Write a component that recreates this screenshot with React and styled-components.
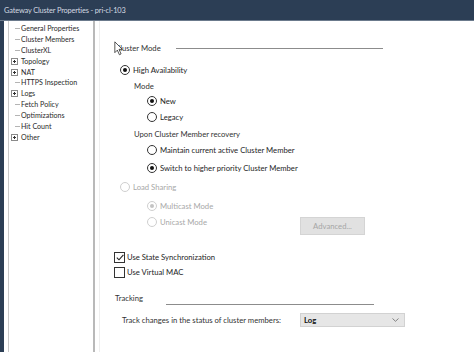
import React from "react";
import styled, { createGlobalStyle } from "styled-components";

const GlobalStyle = createGlobalStyle`
  html, body { margin: 0; padding: 0; }
  body {
    font-family: Lato, "Noto Sans", sans-serif;
    font-size: 7.7px;
    color: #1e1e1e;
    background: #fff;
  }
`;

const Window = styled.div`
  width: 474px;
  height: 352px;
  display: flex;
  flex-direction: column;
  background: #2c3e55;
  overflow: hidden;
`;

const TitleBar = styled.div`
  height: 21px;
  flex: none;
  display: flex;
  align-items: center;
  padding-left: 4px;
  color: #d3d9e1;
  font-size: 7.4px;
  letter-spacing: -0.15px;
  border-bottom: 1px solid #6b7a8c;
  box-sizing: border-box;
`;

const Body = styled.div`
  flex: 1;
  display: flex;
  margin-left: 4px;
  background: #fff;
  padding-left: 4px;
`;

const TreePanel = styled.div`
  width: 84px;
  flex: none;
  border-left: 1px solid #c9c9c9;
  border-right: 2px solid #b9b9b9;
  padding-top: 2px;
  font-size: 7.1px;
`;

const TreeRow = styled.div`
  position: relative;
  height: 10.9px;
  display: flex;
  align-items: center;
  padding-left: 12px;
  white-space: nowrap;
  color: #2a2a2a;
`;

const Branch = styled.span`
  position: absolute;
  left: 6px;
  top: 5px;
  width: 5px;
  border-top: 1px solid #b4b4b4;
`;

const Expander = styled.span`
  position: absolute;
  left: 2px;
  top: 2px;
  width: 5px;
  height: 5px;
  border: 1px solid #8a8a8a;
  background: #fff;
  &::before, &::after {
    content: "";
    position: absolute;
    background: #333;
  }
  &::before { left: 1px; top: 2px; width: 3px; height: 1px; }
  &::after { left: 2px; top: 1px; width: 1px; height: 3px; }
`;

const Content = styled.div`
  flex: 1;
  position: relative;
  padding: 21px 0 0 15px;
  border-left: 1px solid #eeeeee;
  margin-left: 4px;
`;

const GroupHeader = styled.div`
  display: flex;
  align-items: center;
  height: 12px;
  width: ${(p) => p.$width}px;
  margin-top: ${(p) => p.$top || 0}px;
  color: #333;
  white-space: nowrap;
  & > span {
    width: ${(p) => p.$labelWidth}px;
    flex: none;
  }
  &::after {
    content: "";
    flex: 1;
    border-top: 1px solid #8c8c8c;
    transform: translateY(${(p) => p.$lineDrop || 0}px);
  }
`;

const Row = styled.div`
  display: flex;
  align-items: center;
  height: 12px;
  margin-left: ${(p) => p.$indent || 0}px;
  margin-top: ${(p) => p.$top || 0}px;
  color: ${(p) => (p.$disabled ? "#a8a8a8" : "#1e1e1e")};
  white-space: nowrap;
`;

const Label = styled.div`
  height: 12px;
  display: flex;
  align-items: center;
  margin-left: ${(p) => p.$indent || 0}px;
  margin-top: ${(p) => p.$top || 0}px;
  color: #333;
`;

const Radio = styled.span`
  width: 8px;
  height: 8px;
  border-radius: 50%;
  border: 1px solid ${(p) => (p.$disabled ? "#cfcfcf" : "#333")};
  margin-right: 3px;
  display: flex;
  align-items: center;
  justify-content: center;
  flex: none;
  &::after {
    content: "";
    display: ${(p) => (p.$checked ? "block" : "none")};
    width: 4px;
    height: 4px;
    border-radius: 50%;
    background: ${(p) => (p.$disabled ? "#c4c4c4" : "#111")};
  }
`;

const Check = styled.span`
  width: 9px;
  height: 9px;
  border: 1px solid #333;
  margin-right: 2px;
  flex: none;
  display: flex;
  align-items: center;
  justify-content: center;
`;

const ButtonRow = styled.div`
  display: flex;
  align-items: flex-start;
  justify-content: space-between;
  width: 250px;
`;

const DisabledButton = styled.div`
  width: 65px;
  height: 18px;
  margin-top: 5px;
  background: #e1e1e1;
  border: 1px solid #d4d4d4;
  color: #a6a6a6;
  display: flex;
  align-items: center;
  justify-content: center;
  box-sizing: border-box;
`;

const SelectRow = styled.div`
  display: flex;
  align-items: center;
  margin-left: 7px;
  margin-top: 9px;
`;

const SelectLabel = styled.div`
  width: 178px;
  color: #333;
  white-space: nowrap;
`;

const Select = styled.div`
  width: 105px;
  height: 14px;
  background: #e6e6e6;
  border: 1px solid #d2d2d2;
  box-sizing: border-box;
  display: flex;
  align-items: center;
  justify-content: space-between;
  padding: 0 5px 0 3px;
  color: #111;
  font-weight: 700;
`;

const Cursor = styled.svg`
  position: absolute;
  left: 14px;
  top: 20px;
`;

const treeItems = [
  { name: "General Properties" },
  { name: "Cluster Members" },
  { name: "ClusterXL" },
  { name: "Topology", expand: true },
  { name: "NAT", expand: true },
  { name: "HTTPS Inspection" },
  { name: "Logs", expand: true },
  { name: "Fetch Policy" },
  { name: "Optimizations" },
  { name: "Hit Count" },
  { name: "Other", expand: true },
];

export default function App() {
  return (
    <>
      <GlobalStyle />
      <Window>
        <TitleBar>Gateway Cluster Properties - pri-cl-103</TitleBar>
        <Body>
          <TreePanel>
            {treeItems.map((item) => (
              <TreeRow key={item.name}>
                {item.expand ? <Expander /> : <Branch />}
                {item.name}
              </TreeRow>
            ))}
          </TreePanel>
          <Content>
            <GroupHeader $width={268} $labelWidth={61}>
              <span>Cluster Mode</span>
            </GroupHeader>
            <Row $indent={5} $top={10}>
              <Radio $checked />
              High Availability
            </Row>
            <Label $indent={19} $top={4}>Mode</Label>
            <Row $indent={32} $top={3}>
              <Radio $checked />
              New
            </Row>
            <Row $indent={32} $top={4}>
              <Radio />
              Legacy
            </Row>
            <Label $indent={19} $top={5}>Upon Cluster Member recovery</Label>
            <Row $indent={32} $top={4}>
              <Radio />
              Maintain current active Cluster Member
            </Row>
            <Row $indent={32} $top={6}>
              <Radio $checked />
              Switch to higher priority Cluster Member
            </Row>
            <Row $indent={5} $top={7} $disabled>
              <Radio $disabled />
              Load Sharing
            </Row>
            <Row $indent={32} $top={7} $disabled>
              <Radio $disabled $checked />
              Multicast Mode
            </Row>
            <ButtonRow>
              <Row $indent={32} $top={4} $disabled>
                <Radio $disabled />
                Unicast Mode
              </Row>
              <DisabledButton>Advanced...</DisabledButton>
            </ButtonRow>
            <Row $indent={-1} $top={16}>
              <Check>
                <svg width="8" height="7" viewBox="0 0 8 7">
                  <path d="M0.8 3.6 L3 5.8 L7.4 0.8" fill="none" stroke="#222" strokeWidth="1.1" />
                </svg>
              </Check>
              Use State Synchronization
            </Row>
            <Row $indent={-1} $top={3}>
              <Check />
              Use Virtual MAC
            </Row>
            <GroupHeader $width={259} $labelWidth={51} $lineDrop={6} $top={14}>
              <span>Tracking</span>
            </GroupHeader>
            <SelectRow>
              <SelectLabel>Track changes in the status of cluster members:</SelectLabel>
              <Select>
                Log
                <svg width="7" height="4" viewBox="0 0 7 4">
                  <path d="M0.5 0.5 L3.5 3.3 L6.5 0.5" fill="none" stroke="#777" strokeWidth="0.9" />
                </svg>
              </Select>
            </SelectRow>
            <Cursor width="10" height="15" viewBox="0 0 12 18">
              <path d="M1 1 L1 14 L4 11 L6.5 16.5 L8.5 15.5 L6 10 L10 10 Z" fill="#fff" stroke="#222" strokeWidth="0.9" />
            </Cursor>
          </Content>
        </Body>
      </Window>
    </>
  );
}
